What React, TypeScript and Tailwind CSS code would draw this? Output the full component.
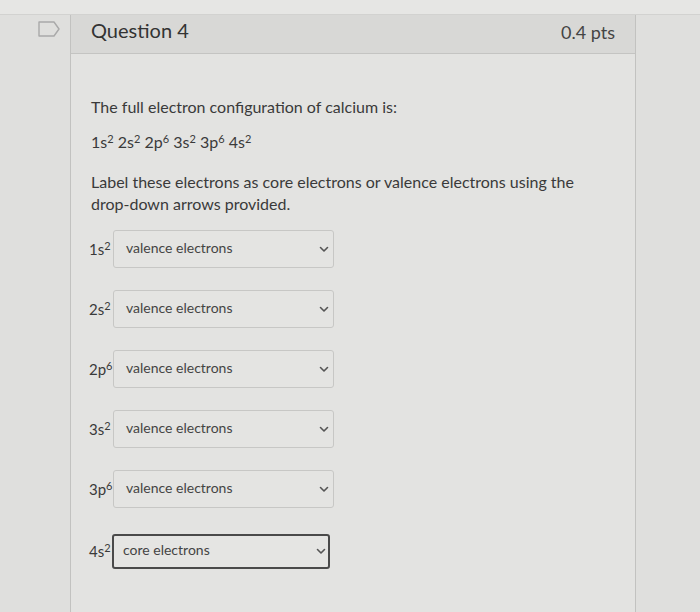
import React from "react";

const rows = [
  { n: "1s", e: "2", value: "valence electrons" },
  { n: "2s", e: "2", value: "valence electrons" },
  { n: "2p", e: "6", value: "valence electrons" },
  { n: "3s", e: "2", value: "valence electrons" },
  { n: "3p", e: "6", value: "valence electrons" },
  { n: "4s", e: "2", value: "core electrons", focused: true },
];

function Orb({ n, e }: { n: string; e: string }) {
  return (
    <span>
      {n}
      <sup className="text-[11px]">{e}</sup>
    </span>
  );
}

function Chevron() {
  return (
    <svg width="10" height="7" viewBox="0 0 10 7" className="shrink-0">
      <polyline points="1.5,1.5 5,5 8.5,1.5" fill="none" stroke="#555" strokeWidth="1.6" strokeLinecap="round" strokeLinejoin="round" />
    </svg>
  );
}

export default function App() {
  return (
    <div
      className="w-[700px] h-[612px] overflow-hidden bg-[#dfdfdd] text-[#3a3a3a]"
      style={{ fontFamily: "Lato, 'Open Sans', sans-serif" }}
    >
      <div className="h-[15px] bg-[#e6e6e4] border-b border-[#d2d2d0]" />
      <div className="flex h-[597px]">
        <div className="w-[70px] shrink-0 pt-[6px] pl-[38px]">
          <svg width="23" height="16" viewBox="0 0 23 16">
            <path d="M1 1 H16 L21 8 L16 15 H1 Z" fill="none" stroke="#a9a9a9" strokeWidth="1.4" strokeLinejoin="round" />
          </svg>
        </div>
        <div className="w-[566px] shrink-0 border-l border-r border-[#c2c2c0] bg-[#e3e3e1]">
          <div className="h-[39px] bg-[#d8d8d6] border-b border-[#c4c4c2] flex items-start justify-between pl-[20px] pr-[20px]">
            <span className="text-[20px] text-[#333] leading-none pt-[5px]">Question 4</span>
            <span className="text-[18px] text-[#444] leading-none pt-[8px]">0.4 pts</span>
          </div>
          <div className="pl-[20px] pt-[42px] text-[16px] leading-[22px]">
            <p>The full electron configuration of calcium is:</p>
            <p className="mt-[13px]">
              <Orb n="1s" e="2" /> <Orb n="2s" e="2" /> <Orb n="2p" e="6" /> <Orb n="3s" e="2" />{" "}
              <Orb n="3p" e="6" /> <Orb n="4s" e="2" />
            </p>
            <p className="mt-[18px] w-[500px]">
              Label these electrons as core electrons or valence electrons using the drop-down arrows provided.
            </p>
            <div className="mt-[15px] flex flex-col gap-[22px]">
              {rows.map((r, i) => (
                <div key={i} className={r.focused ? "flex items-center h-[38px] mt-[2px]" : "flex items-center h-[38px]"}>
                  <span className="text-[15px] w-[24px] shrink-0 -ml-[2px]">
                    <Orb n={r.n} e={r.e} />
                  </span>
                  <div
                    className={
                      r.focused
                        ? "flex items-center justify-between h-[35px] w-[218px] -ml-[1px] rounded-[3px] border-2 border-[#4a4a4a] bg-[#e5e5e3] pl-[9px] pr-[2px]"
                        : "flex items-center justify-between h-[38px] w-[221px] rounded-[3px] border border-[#c7c7c5] bg-[#e4e4e2] pl-[12px] pr-[4px]"
                    }
                  >
                    <span className="text-[14px] text-[#444] -mt-[2px]">{r.value}</span>
                    <Chevron />
                  </div>
                </div>
              ))}
            </div>
          </div>
        </div>
        <div className="flex-1" />
      </div>
    </div>
  );
}
